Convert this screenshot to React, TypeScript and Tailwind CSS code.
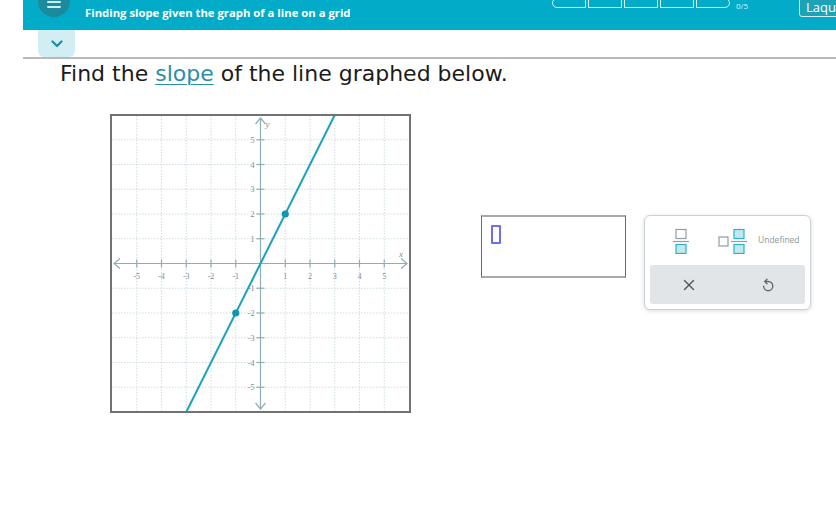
import React from "react";

const U = 24.75;
const OX = 150.5;
const OY = 149.5;
const steps = [-5, -4, -3, -2, -1, 1, 2, 3, 4, 5];

function Graph() {
  return (
    <svg width={301} height={299} viewBox="0 0 301 299" className="block">
      <rect x={0} y={0} width={301} height={299} fill="#ffffff" />
      {steps.map((i) => (
        <g key={"g" + i}>
          <line x1={OX + i * U} y1={2} x2={OX + i * U} y2={297} stroke="#cddde2" strokeWidth={1} strokeDasharray="1.5 1.5" />
          <line x1={2} y1={OY - i * U} x2={299} y2={OY - i * U} stroke="#cddde2" strokeWidth={1} strokeDasharray="1.5 1.5" />
        </g>
      ))}
      {/* axes */}
      <line x1={4} y1={OY} x2={297} y2={OY} stroke="#90adb6" strokeWidth={1.2} />
      <line x1={OX} y1={4} x2={OX} y2={295} stroke="#90adb6" strokeWidth={1.2} />
      <polyline points="10,144.5 4,149.5 10,154.5" fill="none" stroke="#90adb6" strokeWidth={1.2} />
      <polyline points="291,144.5 297,149.5 291,154.5" fill="none" stroke="#90adb6" strokeWidth={1.2} />
      <polyline points="145.5,10 150.5,4 155.5,10" fill="none" stroke="#90adb6" strokeWidth={1.2} />
      <polyline points="145.5,289 150.5,295 155.5,289" fill="none" stroke="#90adb6" strokeWidth={1.2} />
      {steps.map((i) => (
        <g key={"t" + i} fontFamily="'Liberation Serif', serif" fontSize={8} fill="#7d8d92">
          <line x1={OX + i * U} y1={OY - 4} x2={OX + i * U} y2={OY + 4} stroke="#90adb6" strokeWidth={1.2} />
          <line x1={OX - 4} y1={OY - i * U} x2={OX + 4} y2={OY - i * U} stroke="#90adb6" strokeWidth={1.2} />
          <text x={OX + i * U} y={OY + 15} textAnchor="middle">
            {i}
          </text>
          <text x={OX - 6} y={OY - i * U + 3} textAnchor="end">
            {i}
          </text>
        </g>
      ))}
      <text x={OX + 5} y={13} fontFamily="'Liberation Serif', serif" fontStyle="italic" fontSize={9} fill="#7d8d92">
        y
      </text>
      <text x={289} y={143} fontFamily="'Liberation Serif', serif" fontStyle="italic" fontSize={9} fill="#7d8d92">
        x
      </text>
      {/* line y = 2x */}
      <line x1={OX + 3 * U} y1={OY - 6 * U} x2={OX - 3 * U} y2={OY + 6 * U} stroke="#19a2bc" strokeWidth={2} />
      <circle cx={OX + U} cy={OY - 2 * U} r={3.6} fill="#1196b0" />
      <circle cx={OX - U} cy={OY + 2 * U} r={3.6} fill="#1196b0" />
      <rect x={1} y={1} width={299} height={297} fill="none" stroke="#727272" strokeWidth={2} />
    </svg>
  );
}

function FractionIcon() {
  return (
    <svg width={18} height={26} viewBox="0 0 18 26">
      <rect x={4} y={1.5} width={10} height={9} fill="#ffffff" stroke="#8e9ea3" strokeWidth={1.2} />
      <line x1={1} y1={13.5} x2={17} y2={13.5} stroke="#8e9ea3" strokeWidth={1.2} />
      <rect x={4} y={16.5} width={10} height={9} fill="#bfe8ef" stroke="#2fb0c6" strokeWidth={1.2} />
    </svg>
  );
}

function MixedIcon() {
  return (
    <svg width={30} height={26} viewBox="0 0 30 26">
      <rect x={1} y={9} width={9} height={9} fill="#ffffff" stroke="#8e9ea3" strokeWidth={1.2} />
      <rect x={16} y={1.5} width={10} height={9} fill="#bfe8ef" stroke="#2fb0c6" strokeWidth={1.2} />
      <line x1={13} y1={13.5} x2={29} y2={13.5} stroke="#8e9ea3" strokeWidth={1.2} />
      <rect x={16} y={16.5} width={10} height={9} fill="#bfe8ef" stroke="#2fb0c6" strokeWidth={1.2} />
    </svg>
  );
}

function UndoIcon() {
  return (
    <svg width={16} height={16} viewBox="0 0 16 16" fill="none" stroke="#5f6b70" strokeWidth={1.4} strokeLinecap="round" strokeLinejoin="round">
      <path d="M5 4.5h3.2a4.6 4.6 0 1 1 -4.6 4.6" />
      <path d="M7 2.3 4.8 4.5 7 6.7" />
    </svg>
  );
}

function XIcon() {
  return (
    <svg width={14} height={14} viewBox="0 0 14 14" stroke="#4f5a5e" strokeWidth={1.4} strokeLinecap="round">
      <line x1={2.5} y1={2.5} x2={11.5} y2={11.5} />
      <line x1={11.5} y1={2.5} x2={2.5} y2={11.5} />
    </svg>
  );
}

export default function App() {
  return (
    <div className="w-[836px] h-[507px] bg-white overflow-hidden relative" style={{ fontFamily: "'Open Sans', Lato, sans-serif" }}>
      {/* header */}
      <div className="ml-[23px] h-[30px] bg-[#02abc7] flex items-start relative overflow-hidden">
        <div className="ml-[15px] -mt-[15px] w-[32px] h-[32px] rounded-full bg-[#1a8a9c] flex flex-col items-center justify-center gap-[3px] pt-[2px]">
          <div className="w-[14px] h-[2px] bg-[#c8eef4] rounded" />
          <div className="w-[14px] h-[2px] bg-[#c8eef4] rounded" />
          <div className="w-[14px] h-[2px] bg-[#c8eef4] rounded" />
        </div>
        <div className="ml-[15px] mt-[6px] text-white font-bold text-[11.3px] leading-[14px]">
          Finding slope given the graph of a line on a grid
        </div>
        <div className="ml-auto flex items-start">
          <div className="flex gap-[2px] -mt-[2px]">
            <div className="w-[34px] h-[10px] border border-[#d9f4f8] rounded-l-full" />
            <div className="w-[34px] h-[10px] border border-[#d9f4f8]" />
            <div className="w-[34px] h-[10px] border border-[#d9f4f8]" />
            <div className="w-[34px] h-[10px] border border-[#d9f4f8]" />
            <div className="w-[34px] h-[10px] border border-[#d9f4f8] rounded-r-full" />
          </div>
          <div className="ml-[6px] mt-[1px] w-[12px] text-[8px] leading-[10px] text-[#d9f4f8]">0/5</div>
          <div className="ml-[51px] -mr-[34px] -mt-[3px] h-[20px] w-[71px] pl-[6px] border border-[#d3eef3] rounded-[3px] bg-[#1ea2b6] text-white text-[13px] leading-[18px] whitespace-nowrap">
            Laquisha
          </div>
        </div>
      </div>
      {/* tab row */}
      <div className="h-[27px] flex">
        <div className="ml-[38px] w-[37px] h-[27px] bg-[#d0eef4] rounded-b-[6px] flex items-center justify-center">
          <svg width={12} height={8} viewBox="0 0 12 8" fill="none" stroke="#1b8ea4" strokeWidth={2.2} strokeLinecap="round" strokeLinejoin="round">
            <path d="M1.5 1.5 6 6l4.5-4.5" />
          </svg>
        </div>
      </div>
      <div className="ml-[23px] h-[2px] bg-[#b9b9b9]" />
      {/* question */}
      <div className="pl-[60px] pt-[1px] text-[22px] leading-[28px] text-[#1b1b1b]" style={{ fontFamily: "'DejaVu Sans', Verdana, sans-serif" }}>
        Find the <span className="text-[#2a8ea6] underline underline-offset-[3px] decoration-1">slope</span> of the line graphed below.
      </div>
      {/* content */}
      <div className="flex items-start pl-[110px] mt-[26px]">
        <Graph />
        <div className="ml-[70px] mt-[101px] w-[145px] h-[63px] border-x border-x-[#6a6a6a] border-y-2 border-y-[#a9a9a9] pt-[8px] pl-[9px]">
          <div className="w-[10px] h-[19px] border-2 border-[#6f6cf4] rounded-[1px]" />
        </div>
        <div className="ml-[18px] mt-[101px] w-[167px] h-[95px] rounded-[6px] border border-[#c9d2d5] shadow-[0_1px_4px_rgba(0,0,0,0.15)] bg-white flex flex-col px-[5px] pb-[5px]">
          <div className="h-[49px] flex items-center">
            <div className="w-[60px] flex justify-center pl-[2px]">
              <FractionIcon />
            </div>
            <div className="w-[45px] flex justify-center">
              <MixedIcon />
            </div>
            <div className="flex-1 text-[8.5px] text-[#8a979b] pl-[3px]">Undefined</div>
          </div>
          <div className="flex-1 rounded-[3px] bg-[#e1e5e7] flex items-center">
            <div className="w-[78px] flex justify-center">
              <XIcon />
            </div>
            <div className="flex-1 flex justify-center pl-[2px]">
              <UndoIcon />
            </div>
          </div>
        </div>
      </div>
    </div>
  );
}
